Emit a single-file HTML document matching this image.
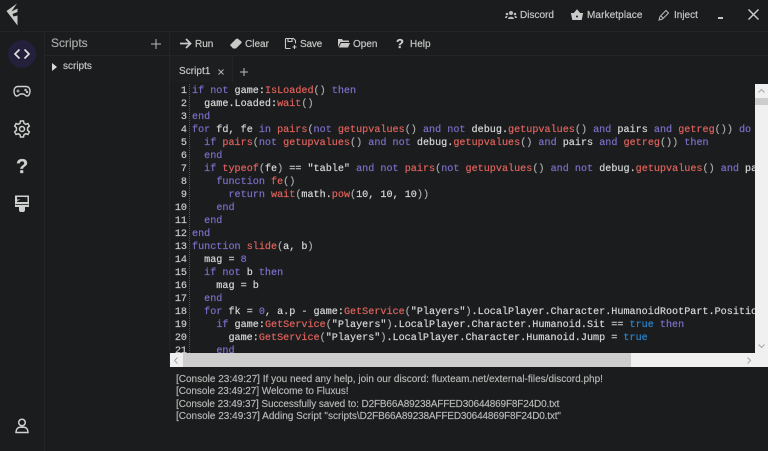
<!DOCTYPE html>
<html><head><meta charset="utf-8"><style>
html,body{margin:0;padding:0;background:#1a1c1e;overflow:hidden}
#r{position:relative;width:768px;height:451px;overflow:hidden;background:#1a1c1e;font-family:"Liberation Sans",sans-serif;color:#c4c4c2}
.t{position:absolute;white-space:nowrap;font-size:10px;line-height:12px;-webkit-text-stroke:.2px}
.l{position:absolute;background:#222427}
svg{position:absolute;overflow:visible}
#code{position:absolute;left:170px;top:84px;width:585px;height:269px;padding-top:1px;box-sizing:border-box;overflow:hidden;font:10.13px/13px "Liberation Mono",monospace;color:#d6d6d6;-webkit-text-stroke:.2px}
#code div{position:relative;height:13px;white-space:pre;padding-left:22px}
#code b{position:absolute;left:0;width:17px;text-align:right;font-weight:normal;color:#c8c8c8}
#guide{position:absolute;left:189px;top:84px;height:269px;border-left:1px dotted #55575a}
i{font-style:normal}
.k{color:#7a6ec6}.f{color:#de625b}.v{color:#2a84ca}.p{color:#a8a8a8}
#con{position:absolute;left:176px;top:374px;font-size:10px;line-height:12.3px;color:#b9b9b7;white-space:pre;-webkit-text-stroke:.15px}
.h{letter-spacing:-.16px}.s{letter-spacing:-.07px}
</style></head><body><div id="r">
<div class="l" style="left:0;top:31px;width:768px;height:1px"></div>
<div class="l" style="left:44px;top:32px;width:1px;height:419px"></div>
<div class="l" style="left:169px;top:32px;width:1px;height:335px"></div>
<div class="l" style="left:45px;top:55px;width:723px;height:1px"></div>
<div class="l" style="left:232px;top:56px;width:1px;height:26px"></div>

<svg style="left:0;top:0" width="20" height="28" viewBox="0 0 20 28"><path d="M17 3.500L6.500 11L17.500 25.500V15.500L13.500 16.500L12.500 14L17.500 12V8.500L11.500 11.500Z" fill="#c9c9c7"/></svg>

<div class="t" style="left:520px;top:10px;">Discord</div>
<div class="t" style="left:587px;top:10px;letter-spacing:.1px">Marketplace</div>
<div class="t" style="left:674px;top:10px">Inject</div>
<svg style="left:505px;top:10px" width="12" height="10" viewBox="0 0 12 10" fill="#bbb"><circle cx="6" cy="3" r="2"/><circle cx="2" cy="4" r="1.300"/><circle cx="10" cy="4" r="1.300"/><path d="M3 9c0-3 6-3 6 0zM0 8c0-2 1.500-2 2.500-2L2 8zM12 8c0-2-1.500-2-2.500-2L10 8z"/></svg>
<svg style="left:571px;top:9px" width="12" height="11" viewBox="0 0 12 11"><path d="M0.500 4.500h11l-1.200 6H1.700z M3 4.500L6 1l3 3.500" fill="#c9c9c7" stroke="#c9c9c7"/><circle cx="6" cy="7.500" r="1" fill="#1a1c1e"/></svg>
<svg style="left:658px;top:9px" width="12" height="12" viewBox="0 0 12 12" fill="none" stroke="#bbb"><path d="M1 11l1-3.500L8 1.500l2.500 2.500-6 6zM3 7l2 2"/></svg>
<div class="l" style="left:718px;top:17px;width:5px;height:2px;background:#c4c4c2"></div>
<svg style="left:748px;top:9px" width="11" height="11" viewBox="0 0 11 11" stroke="#d0d0ce" stroke-width="1.400"><path d="M.500.500l10 10M10.500.500l-10 10"/></svg>

<div style="position:absolute;left:8px;top:40px;width:28px;height:28px;border-radius:50%;background:#241f3a"></div>
<svg style="left:14px;top:48px" width="16" height="12" viewBox="0 0 16 12" fill="none" stroke="#e4e4e4" stroke-width="1.600"><path d="M5.500 1.500L1 6l4.500 4.500M10.500 1.500L15 6l-4.500 4.500"/></svg>
<svg style="left:13px;top:85px" width="18" height="13" viewBox="0 0 18 13" fill="none" stroke="#d0d0ce" stroke-width="1.400"><path d="M5 1.500h8c2.500 0 4 2 4 4.500s-1 5-3 5c-1.500 0-2.500-2-3.500-2h-3C6.500 9 5.500 11 4 11 2 11 1 8.500 1 6s1.500-4.500 4-4.500z"/><path d="M3.500 6h3M5 4.500v3" stroke-width="1"/><circle cx="12.500" cy="5" r=".5"/><circle cx="14" cy="7" r=".5"/></svg>
<svg style="left:14px;top:120px" width="16" height="18" viewBox="0 0 16 18" fill="none" stroke="#d0d0ce" stroke-width="1.500"><path d="M6.500 1h3l.5 2.300 1.700 1 2.200-.8 1.400 2.600-1.700 1.600v2.600l1.700 1.600-1.400 2.600-2.200-.8-1.700 1-.5 2.300h-3l-.5-2.300-1.700-1-2.200.8L.7 11.900l1.700-1.600V7.700L.7 6.100l1.400-2.600 2.200.8 1.700-1z"/><circle cx="8" cy="9" r="2.500"/></svg>
<div class="t" style="left:16px;top:155px;font-size:20px;line-height:24px;color:#d0d0ce;font-weight:bold">?</div>
<svg style="left:15px;top:195px" width="14" height="17" viewBox="0 0 14 17"><path d="M0 0.500h14V12H10V15.500L9 17H5L4 15.500V12H0z" fill="#d0d0ce"/><path d="M2 2h8v2.500H2zM11 2h1.500v5H2v-1" fill="#1a1c1e"/><path d="M0.500 9.500h13" stroke="#1a1c1e" stroke-width=".8"/></svg>
<svg style="left:15px;top:418px" width="14" height="16" viewBox="0 0 14 16" fill="none" stroke="#d0d0ce" stroke-width="1.500"><circle cx="7" cy="4.500" r="3.300"/><path d="M1 14.500h12c0-3-1.500-5-4-5.200H5C2.500 9.500 1 11.500 1 14.500z"/></svg>

<div class="t" style="left:51px;top:36px;font-size:12px;line-height:14px;color:#a8a8a6">Scripts</div>
<svg style="left:151px;top:39px" width="10" height="10" stroke="#bbb"><path d="M5 0v10M0 5h10"/></svg>
<svg style="left:52px;top:63px" width="5" height="8"><path d="M0 0l5 4-5 4z" fill="#d8d8d8"/></svg>
<div class="t" style="left:63px;top:61px;">scripts</div>

<svg style="left:180px;top:38px" width="12" height="11" fill="none" stroke="#c9c9c7" stroke-width="1.800"><path d="M0 5.500h10M6 1l4.500 4.500L6 10"/></svg>
<div class="t" style="left:195px;top:39px">Run</div>
<svg style="left:230px;top:38px" width="12" height="11"><path d="M0 7L6 1l1.500-.5 4 3L11.500 5 6 10.500H3z" fill="#c9c9c7"/></svg>
<div class="t" style="left:245px;top:39px">Clear</div>
<svg style="left:285px;top:38px" width="12" height="11" fill="none" stroke="#c9c9c7" stroke-width="1.100"><path d="M.500.500h8l2 2v3M5.500 10.500h-5zM.500.500v10M3 .500v3h4v-3M9.500 7v4M7.500 9h4"/></svg>
<div class="t" style="left:300px;top:39px;letter-spacing:-.2px">Save</div>
<svg style="left:338px;top:38px" width="12" height="10"><path d="M0 1h4l1 1.500h6V4H2.500L0 9zM3 5h9l-2 4.500H.800z" fill="#c9c9c7"/></svg>
<div class="t" style="left:353px;top:39px">Open</div>
<div class="t" style="left:396px;top:36px;font-size:13px;line-height:15px;color:#d0d0ce;font-weight:bold">?</div>
<div class="t" style="left:410px;top:39px">Help</div>

<div class="l" style="left:170px;top:56px;width:62px;height:26px;background:#1c1e20"></div>
<div class="t" style="left:179px;top:66px;letter-spacing:.05px">Script1</div>
<svg style="left:218px;top:69px" width="6" height="6" stroke="#b5b5b5"><path d="M.500.500l5 5M5.500.500l-5 5"/></svg>
<svg style="left:240px;top:68px" width="8" height="8" stroke="#bbb"><path d="M4 0v8M0 4h8"/></svg>

<div id="guide"></div>
<div id="code">
<div><b>1</b><i class="k">if not</i> game:<i class="f">IsLoaded</i><i class="p">()</i> <i class="k">then</i></div>
<div><b>2</b>  game.Loaded:<i class="f">wait</i><i class="p">()</i></div>
<div><b>3</b><i class="k">end</i></div>
<div><b>4</b><i class="k">for</i> fd, fe <i class="k">in</i> <i class="f">pairs</i><i class="p">(</i><i class="k">not</i> <i class="f">getupvalues</i><i class="p">()</i> <i class="k">and not</i> debug.<i class="f">getupvalues</i><i class="p">()</i> <i class="k">and</i> pairs <i class="k">and</i> <i class="f">getreg</i><i class="p">())</i> <i class="k">do</i></div>
<div><b>5</b>  <i class="k">if</i> <i class="f">pairs</i><i class="p">(</i><i class="k">not</i> <i class="f">getupvalues</i><i class="p">()</i> <i class="k">and not</i> debug.<i class="f">getupvalues</i><i class="p">()</i> <i class="k">and</i> pairs <i class="k">and</i> <i class="f">getreg</i><i class="p">())</i> <i class="k">then</i></div>
<div><b>6</b>  <i class="k">end</i></div>
<div><b>7</b>  <i class="k">if</i> <i class="f">typeof</i><i class="p">(</i>fe<i class="p">)</i> == "table" <i class="k">and not</i> <i class="f">pairs</i><i class="p">(</i><i class="k">not</i> <i class="f">getupvalues</i><i class="p">()</i> <i class="k">and not</i> debug.<i class="f">getupvalues</i><i class="p">()</i> <i class="k">and</i> pairs <i class="k">and</i> <i class="f">getreg</i></div>
<div><b>8</b>    <i class="k">function</i> <i class="f">fe</i><i class="p">()</i></div>
<div><b>9</b>      <i class="k">return</i> <i class="f">wait</i><i class="p">(</i>math.<i class="f">pow</i><i class="p">(</i>10, 10, 10<i class="p">))</i></div>
<div><b>10</b>    <i class="k">end</i></div>
<div><b>11</b>  <i class="k">end</i></div>
<div><b>12</b><i class="k">end</i></div>
<div><b>13</b><i class="k">function</i> <i class="f">slide</i><i class="p">(</i>a, b<i class="p">)</i></div>
<div><b>14</b>  mag = <i class="k">8</i></div>
<div><b>15</b>  <i class="k">if not</i> b <i class="k">then</i></div>
<div><b>16</b>    mag = b</div>
<div><b>17</b>  <i class="k">end</i></div>
<div><b>18</b>  <i class="k">for</i> fk = <i class="k">0</i>, a.p - game:<i class="f">GetService</i><i class="p">(</i>"Players"<i class="p">)</i>.LocalPlayer.Character.HumanoidRootPart.Position.Magnitude</div>
<div><b>19</b>    <i class="k">if</i> game:<i class="f">GetService</i><i class="p">(</i>"Players"<i class="p">)</i>.LocalPlayer.Character.Humanoid.Sit == <i class="v">true</i> <i class="k">then</i></div>
<div><b>20</b>      game:<i class="f">GetService</i><i class="p">(</i>"Players"<i class="p">)</i>.LocalPlayer.Character.Humanoid.Jump = <i class="v">true</i></div>
<div><b>21</b>    <i class="k">end</i></div>
</div>

<div style="position:absolute;left:755px;top:84px;width:13px;height:269px;background:#f0f0f0"></div>
<div style="position:absolute;left:755px;top:98px;width:13px;height:7px;background:#cdcdcd"></div>
<svg style="left:758px;top:89px" width="7" height="4" fill="none" stroke="#a6a6a6"><path d="M.500 3.500l3-3 3 3"/></svg>
<svg style="left:758px;top:344px" width="7" height="4" fill="none" stroke="#a6a6a6"><path d="M.500.500l3 3 3-3"/></svg>
<div style="position:absolute;left:170px;top:353px;width:598px;height:14px;background:#f0f0f0"></div>
<div style="position:absolute;left:183px;top:353px;width:448px;height:14px;background:#cdcdcd"></div>
<svg style="left:174px;top:357px" width="4" height="7" fill="none" stroke="#a6a6a6"><path d="M3.500.500l-3 3 3 3"/></svg>
<svg style="left:747px;top:357px" width="4" height="7" fill="none" stroke="#a6a6a6"><path d="M.500.500l3 3-3 3"/></svg>

<div id="con">[Console 23:49:27] If you need any help, join our discord: fluxteam.net/external-files/discord.php!
<span style="letter-spacing:-.05px">[Console 23:49:27] Welcome to Fluxus!</span>
<span class="s">[Console 23:49:37] Successfully saved to: </span><span class="h">D2FB66A89238AFFED30644869F8F24D0.txt</span>
[Console 23:49:37] Adding Script "scripts\<span class="h">D2FB66A89238AFFED30644869F8F24D0.txt</span>"</div>
</div></body></html>
